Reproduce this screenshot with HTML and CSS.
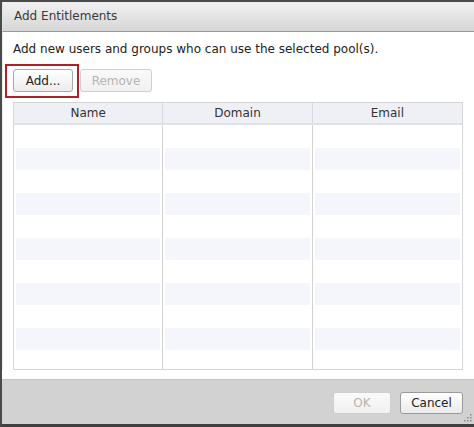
FILE: index.html
```html
<!DOCTYPE html>
<html>
<head>
<meta charset="utf-8">
<link rel="stylesheet" href="styles.css">
</head>
<body>
<div class="dialog">
  <div class="titlebar">Add Entitlements</div>
  <div class="content">
    <p class="desc">Add new users and groups who can use the selected pool(s).</p>
    <div class="toolbar">
      <span class="highlight"><button class="btn">Add...</button></span>
      <button class="btn" disabled>Remove</button>
    </div>
    <div class="grid">
      <div class="row head">
        <div class="cell">Name</div>
        <div class="cell">Domain</div>
        <div class="cell">Email</div>
      </div>
      <div class="rows">
        <div class="row"><div class="cell"></div><div class="cell"></div><div class="cell"></div></div>
        <div class="row alt"><div class="cell"></div><div class="cell"></div><div class="cell"></div></div>
        <div class="row"><div class="cell"></div><div class="cell"></div><div class="cell"></div></div>
        <div class="row alt"><div class="cell"></div><div class="cell"></div><div class="cell"></div></div>
        <div class="row"><div class="cell"></div><div class="cell"></div><div class="cell"></div></div>
        <div class="row alt"><div class="cell"></div><div class="cell"></div><div class="cell"></div></div>
        <div class="row"><div class="cell"></div><div class="cell"></div><div class="cell"></div></div>
        <div class="row alt"><div class="cell"></div><div class="cell"></div><div class="cell"></div></div>
        <div class="row"><div class="cell"></div><div class="cell"></div><div class="cell"></div></div>
        <div class="row alt"><div class="cell"></div><div class="cell"></div><div class="cell"></div></div>
        <div class="row"><div class="cell"></div><div class="cell"></div><div class="cell"></div></div>
      </div>
    </div>
  </div>
  <div class="footer">
    <button class="btn fbtn ok" disabled>OK</button>
    <button class="btn fbtn cancel">Cancel</button>
    <svg class="grip" width="9" height="9" viewBox="0 0 9 9">
      <rect x="7" y="1" width="1.5" height="1.5" fill="#8a8a8a"/>
      <rect x="4" y="4" width="1.5" height="1.5" fill="#8a8a8a"/>
      <rect x="7" y="4" width="1.5" height="1.5" fill="#8a8a8a"/>
      <rect x="1" y="7" width="1.5" height="1.5" fill="#8a8a8a"/>
      <rect x="4" y="7" width="1.5" height="1.5" fill="#8a8a8a"/>
      <rect x="7" y="7" width="1.5" height="1.5" fill="#8a8a8a"/>
    </svg>
  </div>
</div>
</body>
</html>
```

FILE: styles.css
```css
* { box-sizing: border-box; }
html, body { margin: 0; padding: 0; }
body {
  width: 474px;
  height: 427px;
  background: #474747;
  font-family: "DejaVu Sans", sans-serif;
  font-size: 12px;
  color: #333;
  overflow: hidden;
}
.dialog {
  position: relative;
  width: 474px;
  height: 427px;
  border-top: 2px solid #4a4a4a;
  border-left: 2px solid #4a4a4a;
  border-bottom: 3px solid #404040;
  background: #fff;
  display: flex;
  flex-direction: column;
}
.titlebar {
  height: 30px;
  flex: none;
  border-left: 1px solid #e2e2e2;
  border-bottom: 1px solid #9a9a9a;
  background: linear-gradient(#f1f1f1, #d6d6d6);
  padding-left: 11px;
  line-height: 29px;
  font-size: 12px;
  color: #3a3a3a;
}
.content {
  flex: 1;
  border-left: 1px solid #ececec;
  padding: 9px 11px 0 10px;
}
.desc {
  margin: 0;
  line-height: 16px;
  font-size: 12px;
  color: #222;
}
.toolbar {
  margin-top: 12px;
  display: flex;
  gap: 7px;
  height: 23px;
}
.highlight {
  position: relative;
  display: inline-block;
}
.highlight::after {
  content: "";
  position: absolute;
  left: -8px;
  top: -5px;
  right: -6px;
  bottom: -6px;
  border: 2px solid #b02028;
  pointer-events: none;
}
.btn {
  height: 23px;
  padding: 0;
  border: 1px solid #a9a9a9;
  border-radius: 3px;
  background: linear-gradient(#ffffff, #ececec);
  font-family: inherit;
  font-size: 12px;
  color: #222;
  width: 60px;
}
.btn[disabled] {
  color: #b4b4b4;
  border-color: #cfcfcf;
  background: linear-gradient(#fafafa, #f0f0f0);
  width: 72px;
}
.grid {
  margin-top: 10px;
  width: 450px;
  border: 1px solid #d6d6d6;
}
.row {
  display: flex;
  height: 22.5px;
}
.row .cell {
  width: 150px;
  border-right: 1px solid #d2d2d2;
  text-align: center;
}
.row .cell:last-child { border-right: none; }
.head {
  height: 22px;
  background: #eef0f6;
  border-bottom: 2px solid #e0e0e6;
}
.head .cell {
  line-height: 20px;
  color: #333;
  border-right-color: #d8d8e0;
}
.rows {
  height: 244px;
  overflow: hidden;
}
.row.alt .cell {
  background: #f5f5fc;
  background-clip: content-box;
  padding: 0 2px;
}
.footer {
  flex: none;
  height: 45px;
  background: #d2d2d2;
  border-top: 1px solid #c4c4c4;
  margin-top: 9px;
  display: flex;
  justify-content: flex-end;
  align-items: flex-start;
  padding: 12px 11px 0 0;
  gap: 9px;
}
.fbtn { height: 22px; }
.fbtn.ok { width: 58px; }
.fbtn.cancel {
  width: 63px;
  border-color: #9a9a9a;
  background: linear-gradient(#ffffff, #eaeaea);
}
.grip {
  position: absolute;
  right: 2px;
  bottom: 2px;
}
```
